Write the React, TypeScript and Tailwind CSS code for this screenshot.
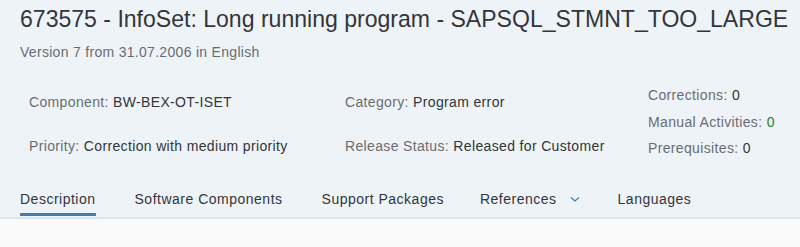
import React from "react";

const font = { fontFamily: '"Liberation Sans", Arial, sans-serif' };

function Attr({ label, value, valueClass = "text-[#32363a]" }: { label: string; value: string; valueClass?: string }) {
  return (
    <div className="text-[14px] leading-[16px] tracking-[0.35px] whitespace-nowrap">
      <span className="text-[#6a6d70]">{label}: </span>
      <span className={valueClass}>{value}</span>
    </div>
  );
}

const tabs = [
  { t: "Description", m: "mr-[39px]" },
  { t: "Software Components", m: "mr-[39px]" },
  { t: "Support Packages", m: "mr-[36px]" },
  { t: "References", m: "mr-[37px]" },
  { t: "Languages", m: "" },
];

export default function App() {
  return (
    <div className="w-[800px] h-[247px] bg-[#fafafa] overflow-hidden" style={font}>
      <div className="bg-[#eef3f8]">
        <div className="pl-[20px] pt-[4px]">
          <h1 className="text-[23.05px] leading-[30px] text-[#32363a] whitespace-nowrap">
            673575 - InfoSet: Long running program - SAPSQL_STMNT_TOO_LARGE
          </h1>
          <div className="mt-[10px] text-[14px] leading-[16px] tracking-[0.3px] text-[#6a6d70]">
            Version 7 from 31.07.2006 in English
          </div>
        </div>
        <div className="flex pl-[29px] mt-[27px] h-[70px]">
          <div className="w-[316px] flex flex-col gap-[28px] pt-[7px]">
            <Attr label="Component" value="BW-BEX-OT-ISET" />
            <Attr label="Priority" value="Correction with medium priority" />
          </div>
          <div className="w-[303px] flex flex-col gap-[28px] pt-[7px]">
            <Attr label="Category" value="Program error" />
            <Attr label="Release Status" value="Released for Customer" />
          </div>
          <div className="flex flex-col gap-[10.5px]">
            <Attr label="Corrections" value="0" />
            <Attr label="Manual Activities" value="0" valueClass="text-[#2b7d2b]" />
            <Attr label="Prerequisites" value="0" />
          </div>
        </div>
        <div className="flex pl-[20px] mt-[24px] border-b-[2px] border-[#d9e4ef] h-[38px] items-stretch">
          {tabs.map(({ t, m }, i) => (
            <div
              key={t}
              className={"relative flex items-center text-[14px] leading-[16px] tracking-[0.5px] text-[#32363a] " + m}
            >
              <span>{t}</span>
              {t === "References" && (
                <svg width="12" height="12" viewBox="0 0 12 12" className="ml-[12px]">
                  <path d="M2 4.5 L6 8 L10 4.5" fill="none" stroke="#427cac" strokeWidth="1.1" />
                </svg>
              )}
              {i === 0 && <div className="absolute left-0 right-0 bottom-[1px] h-[3px] bg-[#427cac] rounded-t-[1px]" />}
            </div>
          ))}
        </div>
      </div>
    </div>
  );
}
